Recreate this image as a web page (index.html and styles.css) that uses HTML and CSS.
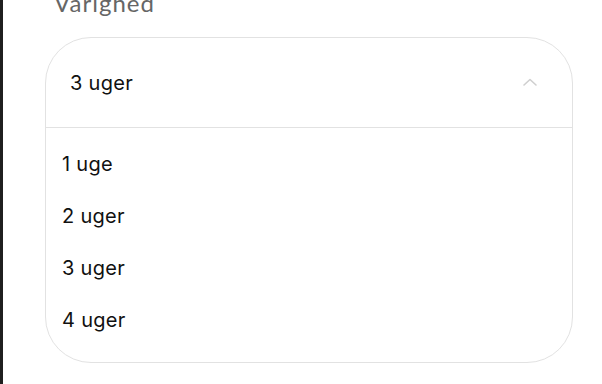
FILE: index.html
```html
<!DOCTYPE html>
<html lang="da">
<head>
<meta charset="utf-8">
<link rel="stylesheet" href="styles.css">
</head>
<body>
<div class="page">
  <div class="field">
    <div class="label">Varighed</div>
    <div class="select">
      <div class="select-head">
        <span class="value">3 uger</span>
        <svg class="chev" width="16" height="10" viewBox="0 0 16 10"><path d="M2 8 L8 2.5 L14 8" fill="none" stroke="#cfcfcf" stroke-width="1.6" stroke-linecap="round" stroke-linejoin="round"/></svg>
      </div>
      <ul class="options">
        <li>1 uge</li>
        <li>2 uger</li>
        <li>3 uger</li>
        <li>4 uger</li>
      </ul>
    </div>
  </div>
</div>
</body>
</html>
```

FILE: styles.css
```css
* { box-sizing: border-box; }
html, body { margin: 0; padding: 0; background: #fff; }
.page {
  width: 602px;
  height: 384px;
  overflow: hidden;
  border-left: 3px solid #1f1f1f;
  font-family: Inter, "Noto Sans", sans-serif;
}
.field {
  padding-left: 42px;
  margin-top: -13px;
}
.label {
  font-family: Lato, "Noto Sans", sans-serif;
  font-size: 24px;
  line-height: 32px;
  color: #666;
  padding-left: 9px;
  letter-spacing: 1px;
  margin-bottom: 18px;
}
.select {
  width: 528px;
  border: 1.5px solid #e2e2e2;
  border-radius: 46px;
  background: #fff;
}
.select-head {
  height: 90px;
  display: flex;
  align-items: center;
  justify-content: space-between;
  padding: 0 34px 0 24px;
  border-bottom: 1.5px solid #e2e2e2;
}
.value {
  font-size: 20px;
  letter-spacing: 0.3px;
  color: #111;
}
.chev { display: block; margin-top: -2px; }
.options {
  list-style: none;
  margin: 0;
  padding: 10px 0 16px 16px;
}
.options li {
  font-size: 20px;
  letter-spacing: 0.3px;
  line-height: 52px;
  color: #111;
}
```
